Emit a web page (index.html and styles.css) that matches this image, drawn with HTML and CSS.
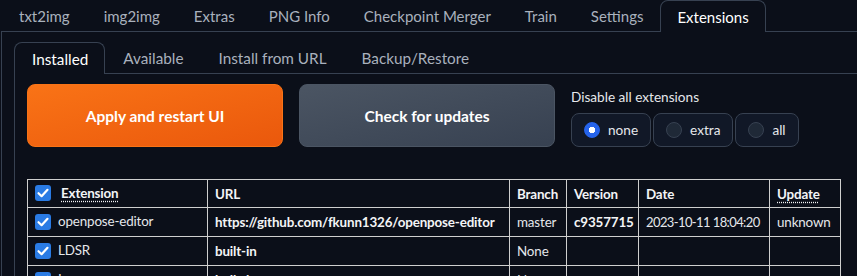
FILE: index.html
```html
<!DOCTYPE html>
<html>
<head>
<meta charset="utf-8">
<link rel="stylesheet" href="styles.css">
</head>
<body>
<div class="app">
  <div class="tabnav">
    <button class="tab">txt2img</button>
    <button class="tab">img2img</button>
    <button class="tab">Extras</button>
    <button class="tab">PNG Info</button>
    <button class="tab">Checkpoint Merger</button>
    <button class="tab">Train</button>
    <button class="tab">Settings</button>
    <button class="tab active">Extensions</button>
  </div>
  <div class="panel">
    <div class="tabnav subnav">
      <button class="tab active">Installed</button>
      <button class="tab">Available</button>
      <button class="tab">Install from URL</button>
      <button class="tab">Backup/Restore</button>
    </div>
    <div class="subpanel">
      <div class="row">
        <button class="btn primary">Apply and restart UI</button>
        <button class="btn secondary">Check for updates</button>
        <div class="radioblock">
          <div class="radiolabel">Disable all extensions</div>
          <div class="radios">
            <label class="radio"><span class="dot checked"></span>none</label>
            <label class="radio"><span class="dot"></span>extra</label>
            <label class="radio"><span class="dot"></span>all</label>
          </div>
        </div>
      </div>
      <table class="ext">
        <colgroup>
          <col class="c1"><col class="c2"><col class="c3"><col class="c4"><col class="c5"><col class="c6">
        </colgroup>
        <thead>
          <tr>
            <th><span class="cb"><svg viewBox="0 0 16 16"><path d="M3.5 8.2 L6.6 11.2 L12.5 4.8" /></svg></span><abbr class="hint">Extension</abbr></th>
            <th>URL</th>
            <th>Branch</th>
            <th>Version</th>
            <th>Date</th>
            <th><abbr class="hint">Update</abbr></th>
          </tr>
        </thead>
        <tbody>
          <tr>
            <td><span class="cb"><svg viewBox="0 0 16 16"><path d="M3.5 8.2 L6.6 11.2 L12.5 4.8" /></svg></span>openpose-editor</td>
            <td class="b">https://github.com/fkunn1326/openpose-editor</td>
            <td>master</td>
            <td class="b">c9357715</td>
            <td class="date">2023-10-11 18:04:20</td>
            <td>unknown</td>
          </tr>
          <tr>
            <td><span class="cb"><svg viewBox="0 0 16 16"><path d="M3.5 8.2 L6.6 11.2 L12.5 4.8" /></svg></span>LDSR</td>
            <td class="b">built-in</td>
            <td>None</td>
            <td></td>
            <td></td>
            <td></td>
          </tr>
          <tr>
            <td><span class="cb"><svg viewBox="0 0 16 16"><path d="M3.5 8.2 L6.6 11.2 L12.5 4.8" /></svg></span>Lora</td>
            <td class="b">built-in</td>
            <td>None</td>
            <td></td>
            <td></td>
            <td></td>
          </tr>
        </tbody>
      </table>
    </div>
  </div>
</div>
</body>
</html>
```

FILE: styles.css
```css
* { box-sizing: border-box; }
html, body {
  margin: 0;
  padding: 0;
  background: #0b0f19;
  overflow: hidden;
  height: 276px;
}
body {
  font-family: Lato, "Liberation Sans", sans-serif;
  color: #e5e7eb;
}
.app {
  width: 900px;
  padding-left: 1px;
}
.tabnav {
  display: flex;
  border-bottom: 1px solid #374151;
  padding-left: 1px;
}
.tab {
  font-family: inherit;
  font-size: 15px;
  color: #a9b1bd;
  background: transparent;
  border: 1px solid transparent;
  border-bottom: none;
  border-radius: 8px 8px 0 0;
  padding: 0 16px;
  height: 31px;
  margin-bottom: -1px;
  cursor: pointer;
}
.tab.active {
  color: #ffffff;
  border-color: #374151;
  background: #0b0f19;
  height: 32px;
}
.panel {
  border-left: 1px solid #374151;
  padding: 10px 12px 0 12px;
}
.subnav {
  padding-left: 0;
}
.subnav .tab {
  height: 31px;
  font-size: 15.3px;
  padding: 0 16px 0 17px;
}
.subnav .tab.active {
  height: 32px;
}
.subpanel {
  border-left: 1px solid #374151;
  padding: 10px 12px 0 12px;
}
.row {
  display: flex;
  gap: 16px;
  align-items: flex-start;
}
.btn {
  font-family: inherit;
  font-size: 15.5px;
  font-weight: 700;
  color: #ffffff;
  width: 256px;
  height: 63px;
  border-radius: 8px;
  cursor: pointer;
}
.primary {
  background: linear-gradient(to bottom right, #f97316, #ea580c);
  border: 1px solid #f97316;
}
.secondary {
  background: linear-gradient(to bottom right, #4b5563, #374151);
  border: 1px solid #4b5563;
}
.radioblock {
  padding-top: 3px;
}
.radiolabel {
  font-size: 13.6px;
  color: #e5e7eb;
  line-height: 20px;
  margin-bottom: 6px;
}
.radios {
  display: flex;
  gap: 2px;
}
.radio {
  display: flex;
  align-items: center;
  gap: 8px;
  height: 34px;
  padding: 0 12px 0 12px;
  border: 1px solid #374151;
  border-radius: 8px;
  background: #111827;
  font-size: 13.6px;
  color: #e5e7eb;
}
.dot {
  width: 16px;
  height: 16px;
  border-radius: 50%;
  border: 1px solid #374151;
  background: #1f2937;
}
.dot.checked {
  border-color: #2563eb;
  background: radial-gradient(circle, #ffffff 0 3px, #2563eb 3.5px);
}
.ext {
  margin-top: 32px;
  border-collapse: collapse;
  table-layout: fixed;
  width: 813px;
  font-size: 13.4px;
  letter-spacing: -0.15px;
}
.c1 { width: 180px; }
.c2 { width: 302px; }
.c3 { width: 57px; }
.c4 { width: 72px; }
.c5 { width: 131px; }
.c6 { width: 71px; }
.ext th, .ext td {
  border: 1px solid #cfcfcf;
  padding: 0 7px;
  text-align: left;
  white-space: nowrap;
  overflow: hidden;
  height: 29px;
}
.ext th {
  height: 28px;
  font-weight: 700;
  color: #f3f4f6;
}
.ext td.b {
  font-weight: 700;
  color: #f3f4f6;
}
.ext td.date {
  letter-spacing: -0.6px;
  font-size: 13px;
}
.cb {
  display: inline-block;
  vertical-align: middle;
  width: 16px;
  height: 16px;
  border-radius: 3px;
  background: #2a7be4;
  margin-right: 7px;
  position: relative;
  top: -1px;
}
.cb svg {
  width: 16px;
  height: 16px;
  display: block;
  fill: none;
  stroke: #ffffff;
  stroke-width: 2.2;
  stroke-linecap: round;
  stroke-linejoin: round;
}
th .cb { margin-right: 10px; }
.hint {
  text-decoration: underline dotted;
  text-underline-offset: 3px;
}
```
